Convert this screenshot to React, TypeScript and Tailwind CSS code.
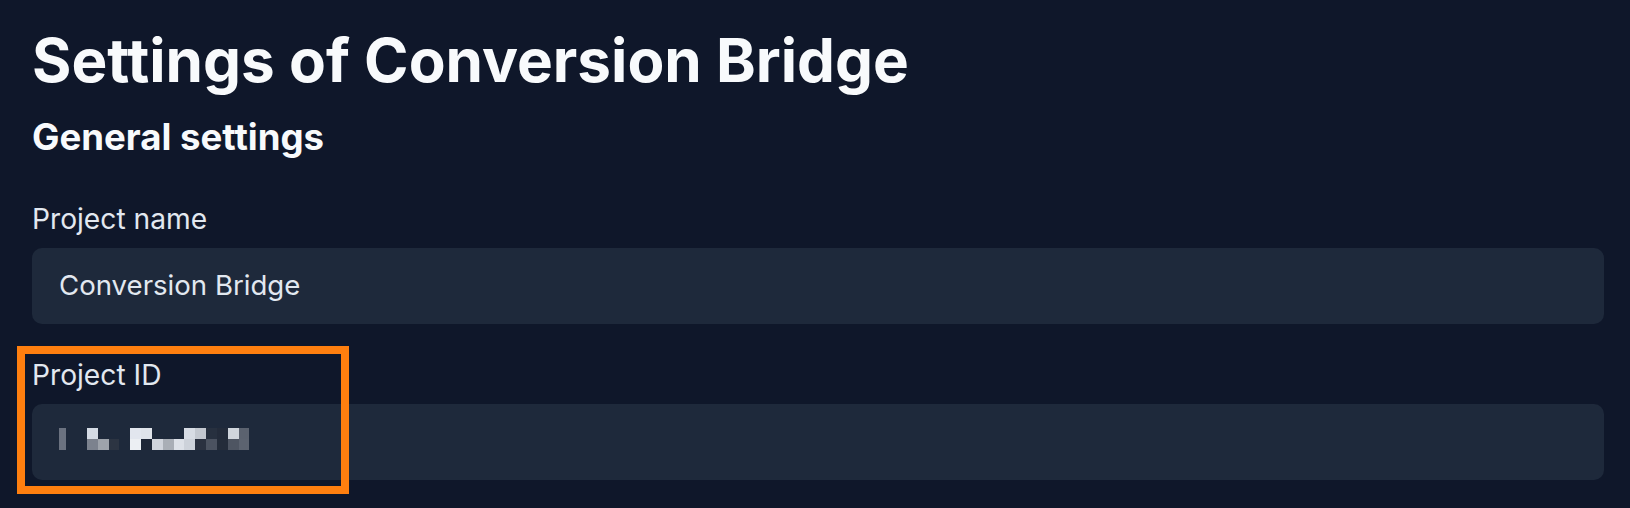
import React from 'react';

// Pixelated (redacted) project id: two rows of blocks
const topRow = [
  '#d5dbe5', '', '', '', '#e2e6ee', '#dfe3ea', '', '', '', '#d7dce4', '#c3c8d0', '#27303f', '#232b3a', '#d0d5dc', '#5b626f',
];
const bottomRow = [
  '#7c828e', '#9ea3ab', '#2c3442', '', '#eceff3', '#1e2636', '#d0d4dc', '#a9aeb6', '#dde1e8', '#cdd2da', '#2a3140', '#4b5260', '#242c3a', '#4e5562', '#5c6370',
];

const RedactedId = () => {
  return (
    <div className="flex items-stretch h-[22px] -mt-[6px]">
      <div className="w-[7px] bg-[#6b7280]" />
      <div className="ml-[21px] flex flex-col">
        {[topRow, bottomRow].map((row, r) => (
          <div key={r} className="flex h-[11px]">
            {row.map((c, i) => (
              <div key={i} className="w-[10.83px] h-[11px]" style={{ backgroundColor: c || 'transparent' }} />
            ))}
          </div>
        ))}
      </div>
    </div>
  );
};

const Field = ({ label, children, highlight }: { label: string; children: React.ReactNode; highlight?: boolean }) => {
  return (
    <div className="relative flex flex-col">
      <label className="text-[28.2px] leading-[1.2] text-[#e2e8f0]">{label}</label>
      <div className="mt-[11.4px] h-[76px] rounded-[10px] bg-[#1e293b] pl-[27px] flex items-center text-[27.6px] text-[#e2e8f0]">
        {children}
      </div>
      {highlight && (
        <div className="absolute -left-[15px] -top-[13px] w-[332px] h-[148px] border-[8px] border-[#ff7f0f] pointer-events-none" />
      )}
    </div>
  );
};

export default function App() {
  return (
    <div
      className="w-[1630px] h-[508px] overflow-hidden bg-[#0f172a] pl-[32px] pr-[26px] pt-[25px]"
      style={{ fontFamily: 'Inter, "Noto Sans", sans-serif' }}
    >
      <h1 className="text-[60.2px] leading-[1.2] font-bold text-[#f8fafc]">Settings of Conversion Bridge</h1>
      <h2 className="mt-[19px] text-[36.6px] leading-[1.2] font-bold text-[#f8fafc]">General settings</h2>
      <div className="mt-[42.6px] flex flex-col gap-[34.8px]">
        <Field label="Project name">Conversion Bridge</Field>
        <Field label="Project ID" highlight>
          <RedactedId />
        </Field>
      </div>
    </div>
  );
}
